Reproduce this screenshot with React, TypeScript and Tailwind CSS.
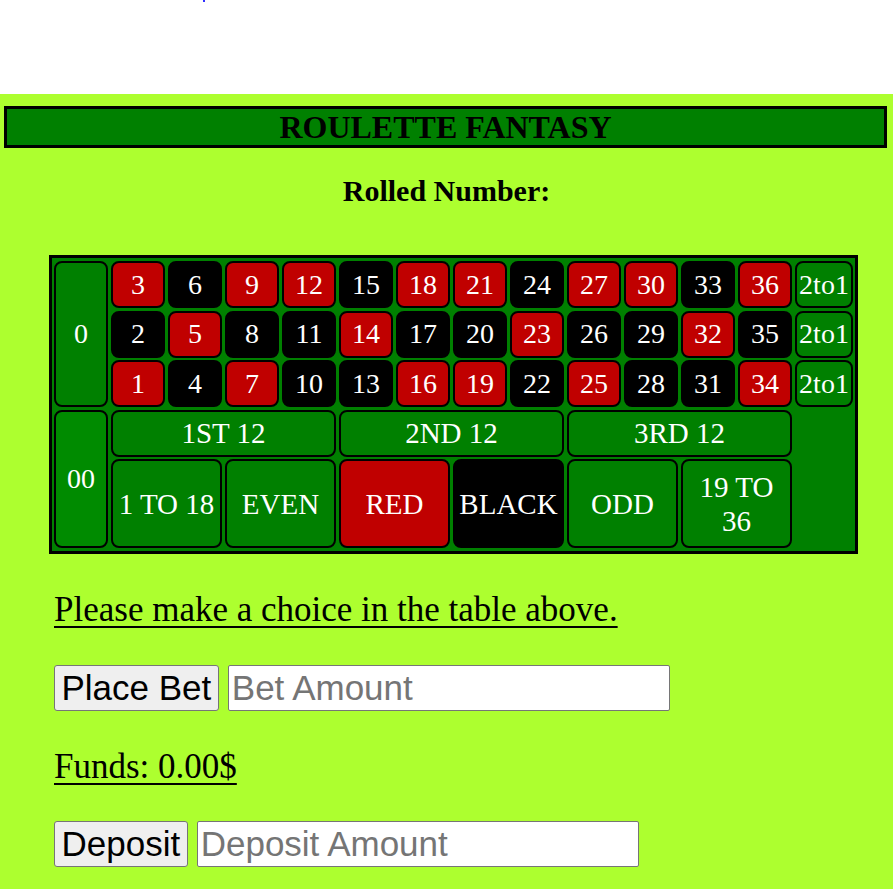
import { Fragment } from "react";

const RED = new Set([1, 3, 5, 7, 9, 12, 14, 16, 18, 19, 21, 23, 25, 27, 30, 32, 34, 36]);

const rows = [
  [3, 6, 9, 12, 15, 18, 21, 24, 27, 30, 33, 36],
  [2, 5, 8, 11, 14, 17, 20, 23, 26, 29, 32, 35],
  [1, 4, 7, 10, 13, 16, 19, 22, 25, 28, 31, 34],
];

const cell =
  "flex items-center justify-center rounded-lg border-2 border-black text-white text-[28px] leading-[34px] text-center";
const wide =
  "flex items-center justify-center rounded-lg border-2 border-black text-white text-[29px] leading-[34px] text-center";

const NumberCell = ({ n }: { n: number }) => (
  <div className={`${cell} ${RED.has(n) ? "bg-[#c00000]" : "bg-black"}`}>{n}</div>
);

const RouletteTable = () => {
  return (
    <div className="ml-[49px] mt-[47px] w-[809px] border-[3px] border-black bg-[#008000] pt-[3px] pb-[3px] pl-[2px]">
      <div className="grid grid-cols-[54px_repeat(12,54px)_58px] grid-rows-[47px_47px_47px_47px_89px] gap-x-[3px] gap-y-[2.5px]">
        <div className={`${cell} row-span-3 bg-[#008000]`}>0</div>
        {rows.map((row, i) => (
          <Fragment key={i}>
            {row.map((n) => (
              <NumberCell key={n} n={n} />
            ))}
            <div className={`${cell} bg-[#008000]`}>2to1</div>
          </Fragment>
        ))}
        <div className={`${cell} row-span-2 bg-[#008b00]`}>00</div>
        <div className={`${wide} col-span-4 bg-[#008000]`}>1ST 12</div>
        <div className={`${wide} col-span-4 bg-[#008000]`}>2ND 12</div>
        <div className={`${wide} col-span-4 bg-[#008000]`}>3RD 12</div>
        <div />
        <div className={`${wide} col-span-2 bg-[#008000]`}>1 TO 18</div>
        <div className={`${wide} col-span-2 bg-[#008000]`}>EVEN</div>
        <div className={`${wide} col-span-2 bg-[#c00000]`}>RED</div>
        <div className={`${wide} col-span-2 bg-black`}>BLACK</div>
        <div className={`${wide} col-span-2 bg-[#008000]`}>ODD</div>
        <div className={`${wide} col-span-2 bg-[#008000]`}>
          19 TO
          <br />
          36
        </div>
      </div>
    </div>
  );
};

const ActionRow = ({ label, placeholder }: { label: string; placeholder: string }) => (
  <div className="flex items-center gap-[9px]">
    <button
      className="h-[46px] whitespace-nowrap rounded-[3px] border border-[#767676] bg-[#efefef] px-[6.5px] text-[35px] leading-[40px] text-black"
      style={{ fontFamily: '"Liberation Sans", Arial, sans-serif' }}
    >
      {label}
    </button>
    <input
      className="h-[46px] w-[442px] rounded-[2px] border border-[#767676] bg-white px-[3px] text-[35px] leading-[40px] text-black placeholder:text-[#757575] outline-none"
      style={{ fontFamily: '"Liberation Sans", Arial, sans-serif' }}
      placeholder={placeholder}
    />
  </div>
);

export default function App() {
  return (
    <div
      className="flex min-h-screen flex-col bg-white"
      style={{ fontFamily: '"Liberation Serif", "Times New Roman", serif' }}
    >
      <div className="h-[94px] shrink-0">
        <div className="ml-[203px] h-[2px] w-[2px] bg-[#3030ff]" />
      </div>
      <div className="flex-1 bg-[#adff2f] pt-[12px] pb-[20px]">
        <div className="ml-[4px] mr-[6px] h-[42px] border-[3px] border-black bg-[#008000] text-center text-[32px] font-bold leading-[36px] text-black">
          ROULETTE FANTASY
        </div>
        <div className="mt-[26px] text-center text-[30px] font-bold leading-[34px] text-black">Rolled Number:</div>

        <RouletteTable />

        <div className="pl-[54px]">
          <p className="mt-[36px] text-[35px] leading-[40px] text-black underline decoration-2 underline-offset-[5px]">
            Please make a choice in the table above.
          </p>
          <div className="mt-[35px]">
            <ActionRow label="Place Bet" placeholder="Bet Amount" />
          </div>
          <p className="mt-[36px] text-[35px] leading-[40px] text-black underline decoration-2 underline-offset-[5px]">
            Funds: 0.00$
          </p>
          <div className="mt-[34px]">
            <ActionRow label="Deposit" placeholder="Deposit Amount" />
          </div>
        </div>
      </div>
    </div>
  );
}
